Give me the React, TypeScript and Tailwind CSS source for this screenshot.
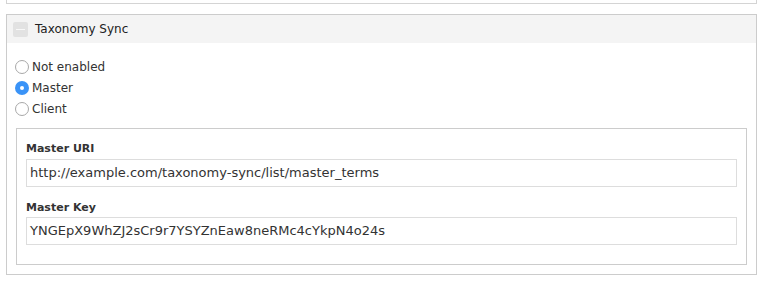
import React from "react";

const font = { fontFamily: '"DejaVu Sans", "Lucida Grande", sans-serif' };

function Radio({ checked, label }: { checked?: boolean; label: string }) {
  return (
    <label className="flex items-center h-[21px] gap-[3px] text-[12px] text-[#333]">
      {checked ? (
        <span className="w-[14px] h-[14px] rounded-full bg-[#3a93f7] flex items-center justify-center">
          <span className="w-[4px] h-[4px] rounded-full bg-white" />
        </span>
      ) : (
        <span className="w-[14px] h-[14px] rounded-full border border-[#a8a8a8] bg-white" />
      )}
      <span>{label}</span>
    </label>
  );
}

export default function App() {
  return (
    <div className="bg-white w-[766px] h-[284px]" style={font}>
      <div className="ml-[6px] w-[751px] h-[4px] border-x border-b border-[#d4d4d4]" />
      <div className="ml-[6px] mt-[10px] w-[751px] h-[261px] border border-[#cccccc] flex flex-col">
        <div className="h-[28px] bg-[#f4f4f4] flex items-center pl-[6px] gap-[7px]">
          <span className="w-[15px] h-[15px] rounded-[2px] bg-[#e2e2e2] flex items-center justify-center">
            <span className="w-[9px] h-[1px] bg-[#f8f8f8]" />
          </span>
          <span className="text-[12px] text-[#222]">Taxonomy Sync</span>
        </div>
        <div className="pt-[13px] pl-[8px]">
          <Radio label="Not enabled" />
          <Radio label="Master" checked />
          <Radio label="Client" />
        </div>
        <div className="ml-[9px] mt-[9px] w-[731px] h-[137px] border border-[#cccccc] px-[9px] pt-[13px]">
          <div className="text-[11px] font-bold text-[#333] leading-[14px]">Master URI</div>
          <div className="mt-[3px] w-[711px] h-[28px] border border-[#dddddd] flex items-center px-[3px] text-[13px] text-[#333]">
            http://example.com/taxonomy-sync/list/master_terms
          </div>
          <div className="mt-[14px] text-[11px] font-bold text-[#333] leading-[14px]">Master Key</div>
          <div className="mt-[2px] w-[711px] h-[28px] border border-[#dddddd] flex items-center px-[3px] text-[13px] text-[#333]">
            YNGEpX9WhZJ2sCr9r7YSYZnEaw8neRMc4cYkpN4o24s
          </div>
        </div>
      </div>
    </div>
  );
}
